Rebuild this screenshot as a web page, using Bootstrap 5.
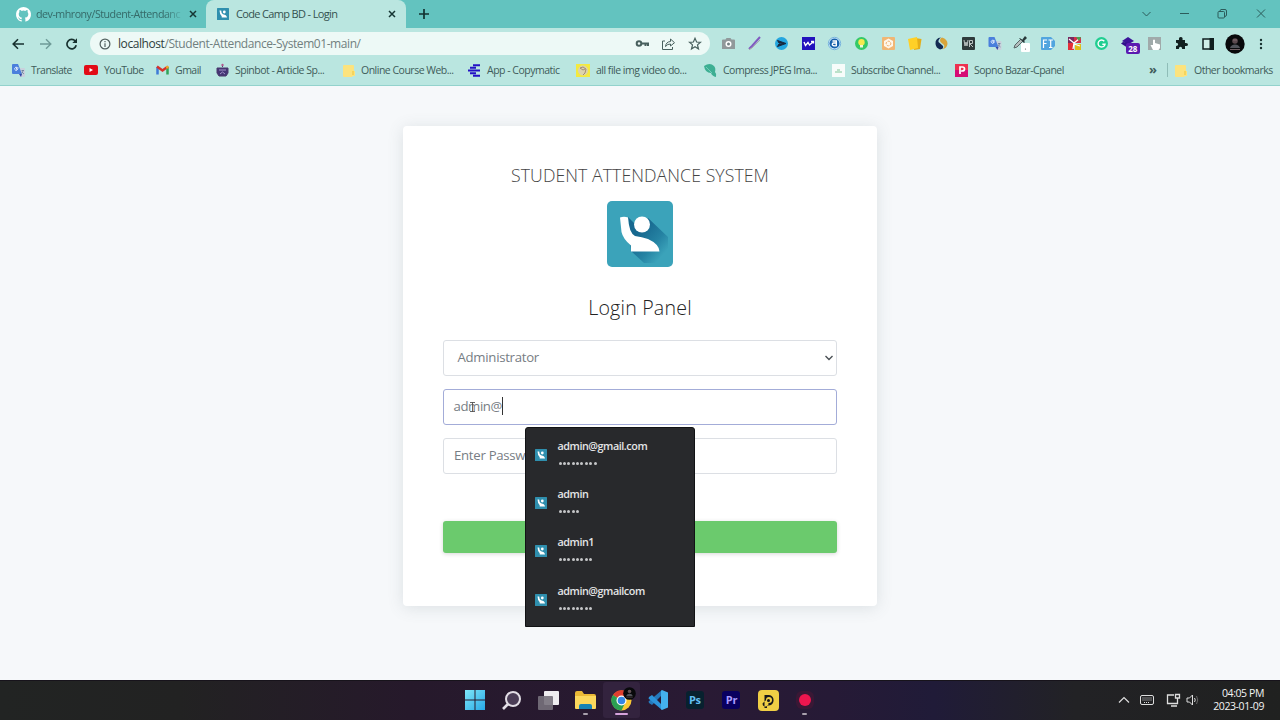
<!DOCTYPE html>
<html lang="en">
<head>
<meta charset="utf-8">
<title>Code Camp BD - Login</title>
<link href="https://cdn.jsdelivr.net/npm/bootstrap@5.3.0/dist/css/bootstrap.min.css" rel="stylesheet">
<style>
body{width:1280px;height:720px;overflow:hidden;background:#f6f8fa;font-family:"Open Sans","Noto Sans",sans-serif;font-size:11px;line-height:14px;color:#3f5c5a}
svg{display:block;flex:none;overflow:visible}
.tabstrip{height:28px;background:#63c3bf}
.tab1{width:206px;padding:0 9px 0 16px;letter-spacing:-.5px;font-size:10.7px;color:#356a68}
.tab1 .ttl{width:146px;margin-left:5px;-webkit-mask-image:linear-gradient(90deg,#000 88%,rgba(0,0,0,.15))}
.tab2{width:200px;background:#bae6e0;border-radius:8px 8px 0 0;padding:0 10px 0 11px;color:#34524f;letter-spacing:-.65px}
.toolbar{height:31px;background:#bae6e0}
.navs{width:90px;padding-left:12px;gap:13.5px}
.omni{width:620px;height:23px;border-radius:12px;background:#edf9f6;padding:0 9px 0 9px;font-size:12px;letter-spacing:-.43px;color:#71807f}
.omni b{font-weight:400;color:#2e3e3d}
.exts{margin-left:4.7px}
.exts>span{width:26.68px;display:flex;justify-content:center;position:relative}
.cnt{position:absolute;left:11px;top:6px;width:14px;height:11px;border-radius:2px;background:#5b1ab0;color:#fff;font-weight:700;font-size:8px;line-height:11px;text-align:center}
.marks{height:27px;background:#bae6e0;border-bottom:1px solid #93d2cc;display:grid;grid-template-columns:72px 72px 60px 127px 125px 108px 128px 128px 122px 195px 18px 8px 97px;padding-left:12px;padding-bottom:4px;align-items:center;letter-spacing:-.5px;font-size:10.5px}
.marks>span{display:flex;align-items:center;white-space:nowrap}
.marks svg{margin-right:6px}
.marks .vr{width:1px;height:14px;min-height:0;background:#8fbdb8;opacity:1;align-self:center}
.main-area{height:594px;padding-top:40px}
.login{width:474px;height:480px;border:0;border-radius:4px;padding:39px 40px 40px;box-shadow:0 2px 16px rgba(90,105,115,.16);font-family:"Open Sans",sans-serif;align-items:center}
.login h1{font-size:17.7px;font-weight:300;line-height:20px;margin:0 0 16px;color:#444;letter-spacing:.06px}
.login h2{font-size:19.6px;line-height:26px;font-weight:300;margin:28px 0 19px;color:#222;letter-spacing:.2px}
.fld{width:394px;height:36px;border:1px solid #dcdfe4;border-radius:3px;background:#fff;font-size:13.2px;color:#777d84;padding:0 10px 2px;margin-bottom:13.2px;display:flex;align-items:center;letter-spacing:-.28px;position:relative}
.fld.on{border-color:#a3acd8;padding-left:9.5px;letter-spacing:-.4px}
.ibeam{position:absolute;left:26px;top:12px}
.go{width:394px;height:32px;border:0;border-radius:3px;background:#6bca6d;margin-top:33px;box-shadow:0 1px 4px rgba(0,0,0,.16)}
.pop{position:absolute;left:81px;top:36.500px;width:170px;height:200px;background:#28292c;border:1.500px solid #111214;border-radius:3px 3px 0 0;z-index:5;padding-top:1px}
.pop>div{height:48.400px;padding:10px 0 0 9px;gap:10.500px;color:#e4e5e6;font-size:10.800px;font-weight:600;letter-spacing:-.46px}
.pop svg{margin-top:10px}
.dots{display:flex;gap:1.4px;margin:9px 0 0 1px}
.dots i{width:3px;height:3px;border-radius:50%;background:#c5c6c8}
.taskbar{height:40px;background:linear-gradient(90deg,#222423 0,#222222 14%,#26192b 32%,#291a34 55%,#261a36 65%,#201b38 73%,#222225 84%,#202120);border-top:1px solid #17131b;display:grid;grid-template-columns:457px 366px 1fr}
.apps>span{width:36.65px;height:36px;display:flex;align-items:center;justify-content:center;position:relative;margin-top:1px}
.apps .run::after{content:"";position:absolute;bottom:3px;left:16px;width:5px;height:2px;border-radius:1px;background:#a9a1ad}
.apps .cur{background:#33233e;border-radius:3px}
.apps .cur::after{left:12px;width:13px;background:#d6a3dc}
.sq{width:18px;height:18px;border-radius:3px;font-size:11px;font-weight:700;line-height:17px;text-align:center;letter-spacing:-.3px}
.clock{font-size:10.5px;line-height:13px;color:#f4f4f4;text-align:right;width:66px;letter-spacing:-.4px;white-space:nowrap;font-weight:500}
</style>
</head>
<body>
<svg width="0" height="0" class="position-absolute"><defs>
<linearGradient id="lg" x1="0" y1="0" x2="1" y2="1"><stop offset=".3" stop-color="#17688f"/><stop offset=".62" stop-color="#2583a3"/><stop offset=".85" stop-color="#3ba3ba"/></linearGradient>
<linearGradient id="win" x1="0" y1="0" x2="1" y2="1"><stop stop-color="#7fe6f8"/><stop offset="1" stop-color="#27a8e6"/></linearGradient>
<symbol id="hand" viewBox="0 0 66 66"><rect width="66" height="66" rx="5" fill="#3ba3ba"/><path d="M21 16L29 24L41 17L61 36V58Q58 62 50 62H37L24 50Z" fill="url(#lg)"/><circle cx="35" cy="23.500" r="8" fill="#fff"/><path d="M13 16.500Q17 15 21 16.500Q22 32 28 35Q35 36 41 38Q52 43 52.500 50.500H24V44.500Q16 38 14.500 31Z" fill="#fff"/></symbol>
<symbol id="fav" viewBox="0 0 12 12"><rect width="12" height="12" rx=".5" fill="#2f8fae"/><circle cx="7.300" cy="4" r="1.400" fill="#fff"/><path d="M2.500 2.500H4.200Q4.300 5.800 6 6.300Q9.500 6.800 10 9.500H4.700V8.300Q2.700 6.500 2.500 2.500Z" fill="#fff"/></symbol>
<symbol id="xx" viewBox="0 0 8 8"><path d="M1 1L7 7M7 1L1 7" stroke="#163634" stroke-width="1.500"/></symbol>
<symbol id="gt" viewBox="0 0 13 13"><path d="M5 4H12Q13 4 13 5V12Q13 13 12 13H8Z" fill="#c9d1dc"/><path d="M1 0H6L10 10H1Q0 10 0 9V1Q0 0 1 0Z" fill="#4a7fdc"/><path d="M6.600 4H4.500V5.300H5.700Q5 6.700 3.700 6.300Q2.500 5.700 2.700 4.400Q3.500 2.500 5.300 3.400" stroke="#e5efff" fill="none"/><path d="M7 10L9 13L10 10Z" fill="#3347a5"/><path d="M9.500 6.500H12M11 6Q11 8.500 9.500 9.500M9.800 8L12 10" stroke="#6a7b98" stroke-width=".8" fill="none"/></symbol>
<symbol id="fold" viewBox="0 0 12 13"><path d="M1 1H10Q11 1 11 2V7H12V12H10L9 13H1Q0 13 0 12V2Q0 1 1 1Z" fill="#fce37e"/><path d="M9 7H11V11H9Z" fill="#f5d45d"/></symbol>
<symbol id="me" viewBox="0 0 20 20"><circle cx="10" cy="10" r="9.700" fill="#08090b"/><circle cx="10" cy="7" r="2.800" fill="#5a494e"/><path d="M5 14Q6 10.500 10 10.500T15 14Z" fill="#51535a"/><path d="M5 15.500H15M8 6H12" stroke="#8a7478" stroke-width=".8"/></symbol>
</defs></svg>

<header>
<div class="tabstrip d-flex">
 <div class="tab1 d-flex align-items-center"><svg width="15" height="15" viewBox="0 0 16 16"><path fill="#fff" d="M8 0a8 8 0 0 0-2.530 15.590c.4.070.55-.17.55-.38v-1.490c-2.230.48-2.700-.95-2.700-.95-.36-.92-.89-1.170-.89-1.170-.73-.5.050-.49.050-.49.800.060 1.230.830 1.230.830.720 1.230 1.880.87 2.330.67.070-.52.280-.87.510-1.070-1.780-.2-3.640-.89-3.640-3.950 0-.87.310-1.590.82-2.150-.08-.2-.36-1.020.08-2.120 0 0 .67-.22 2.200.82a7.400 7.400 0 0 1 4 0c1.530-1.040 2.200-.82 2.200-.82.440 1.100.160 1.920.080 2.120.51.560.82 1.270.82 2.150 0 3.070-1.870 3.750-3.650 3.950.290.250.540.730.540 1.480v2.190c0 .210.150.460.550.380A8 8 0 0 0 8 0z"/></svg><div class="ttl text-nowrap">dev-mhrony/Student-Attendanc</div><svg class="ms-auto" width="8" height="8"><use href="#xx"/></svg></div>
 <div class="tab2 d-flex align-items-center"><svg width="12" height="12"><use href="#fav"/></svg><span class="text-nowrap" style="margin-left:7px">Code Camp BD - Login</span><svg class="ms-auto" width="8" height="8"><use href="#xx"/></svg></div>
 <svg style="margin:9px 0 0 13px" width="10" height="10"><path d="M5 0V10M0 5H10" stroke="#123230" stroke-width="1.700"/></svg>
 <div class="ms-auto d-flex align-items-center" style="width:139px"><svg width="139" height="26" fill="none" stroke="#2c5c5b"><path d="M1.500 11L5.500 15L9.500 11M39 12.500H48"/><rect x="77" y="10.500" width="6.500" height="6.500" rx="1"/><path d="M79 10.500Q79 8.500 80 8.500H84Q85.500 8.500 85.500 10V14Q85.500 15.500 83.500 15.500M116 8.500L124 16.500M124 8.500L116 16.500"/></svg></div>
</div>
<div class="toolbar d-flex align-items-center">
 <div class="navs d-flex align-items-center">
  <svg width="13" height="12" fill="none" stroke="#17312f" stroke-width="1.600"><path d="M12 6H1.500M6 1.200L1.200 6L6 10.800"/></svg>
  <svg width="13" height="12" fill="none" stroke="#6f9b98" stroke-width="1.400"><path d="M1 6H11.500M7 1.200L11.800 6L7 10.800"/></svg>
  <svg width="13" height="12" fill="none" stroke="#17312f" stroke-width="1.700"><path d="M10.300 3.200A4.700 4.700 0 1 0 11.200 7.300"/><path d="M12 .3V5H7.300Z" fill="#17312f" stroke="none"/></svg>
 </div>
 <div class="omni d-flex align-items-center"><svg width="12" height="12" fill="none" stroke="#52605f" stroke-width="1.200"><circle cx="6" cy="6" r="4.900"/><path d="M6 5.300V9M6 3V4.300"/></svg><span style="margin-left:7px"><b>localhost</b>/Student-Attendance-System01-main/</span>
  <svg class="ms-auto" width="65" height="14" fill="none" stroke="#48605e"><circle cx="3" cy="6.500" r="2.300" stroke-width="2"/><path d="M5.500 6.500H12V9M9.500 6.500V9" stroke-width="2"/><path d="M29 4H26.500V12.500H36.500V10"/><path d="M29.500 9.500Q30 4.800 34.500 4.500V2L38.500 5.700L34.500 9V7Q31.500 6.800 29.500 9.500Z"/><path d="M59 1.300L60.600 5L64.500 5.300L61.500 7.900L62.500 12L59 9.800L55.500 12L56.500 7.900L53.500 5.300L57.400 5Z" stroke-width="1.200"/></svg></div>
 <div class="exts d-flex align-items-center">
  <span><svg width="13" height="13"><path d="M0 3.500Q0 2.500 1 2.500H3.500L4.500 1H8.500L9.500 2.500H12Q13 2.500 13 3.500V12H0Z" fill="#91999b"/><circle cx="6.500" cy="7" r="3" fill="#fff"/><circle cx="6.500" cy="7" r="1.500" fill="#748083"/></svg></span>
  <span><svg width="13" height="13"><path d="M12 0L4 9L1 12" stroke="#805bc0" stroke-width="2" fill="none"/><path d="M1 12.500L4 11L12 3" stroke="#aaa" fill="none"/></svg></span>
  <span><svg width="13" height="13"><circle cx="6.500" cy="6.500" r="6.500" fill="#24a6df"/><path d="M2.500 3.500L11 6.500L2.500 9.500L4 7H7V6H4Z" fill="#18283f" stroke="#18283f"/></svg></span>
  <span><svg width="13" height="13"><rect width="13" height="13" fill="#2212bd"/><path d="M2 5L3.500 8.500L6 5.500L7.500 8L11 5M9 4.500H11.500V6.500" stroke="#fff" stroke-width="1.400" fill="none"/></svg></span>
  <span><svg width="13" height="13"><circle cx="6.500" cy="6.500" r="6.200" fill="#d4efff" stroke="#579ed2" stroke-width=".7"/><circle cx="6.500" cy="6.500" r="5" fill="#1761ac"/><path d="M4.500 4H8.300V9.300M8.300 6H5.500Q4.300 6 4.300 7.600T8.300 8.800" stroke="#fff" stroke-width="1.400" fill="none"/></svg></span>
  <span><svg width="13" height="13"><circle cx="6.500" cy="6.500" r="6.500" fill="#35c967"/><circle cx="6.500" cy="5.300" r="3.200" fill="#f5e94d"/><path d="M5 8H8V10.500H5Z" fill="#f1f6d6"/></svg></span>
  <span><svg width="13" height="13"><rect width="13" height="13" rx="1" fill="#f0b674"/><path d="M6.500 1.500L11 4V9L6.500 11.500L2 9V4Z" fill="#fff6e9"/><circle cx="6.500" cy="6.500" r="2.300" fill="none" stroke="#eba65c" stroke-dasharray="2 1"/></svg></span>
  <span><svg width="14" height="13"><path d="M7 1L13.500 2L12 12L6 13Z" fill="#e4ae18"/><path d="M0 2L9 0L10 11L2 13Z" fill="#ffd027"/></svg></span>
  <span><svg width="13" height="13"><path d="M6 .5Q0 1 .5 7Q1 11 5 12.500Q9 12 8 9L3.500 5Q3 2.500 6 .5Z" fill="#132b53"/><path d="M7 .5Q12.500 2 12.500 7Q12 11 7.500 12.500Q10 10 9 8L5.500 5Q4 2 7 .5Z" fill="#d8a439"/></svg></span>
  <span><svg width="13" height="13"><rect width="13" height="13" rx="1" fill="#2e3a3b"/><path d="M2 3L3 9L4 5L5 9L6 3M7.500 10V3.500H10.500V6.500H7.500L11 10" stroke="#bbc2c2" fill="none"/></svg></span>
  <span><svg width="14" height="13"><use href="#gt"/></svg></span>
  <span><svg width="17" height="17"><path d="M1 13L2 10L8 4L10 6L4 12Z" fill="#b4bebe" stroke="#586667"/><path d="M7 3L9 5L12 1L14 3L11 6L12 7L11 8L6 3Z" fill="#29383a"/><rect x="8" y="8" width="9" height="9" rx="1" fill="#fff"/><circle cx="12.500" cy="14" r=".6" fill="#555"/></svg></span>
  <span><svg width="14" height="13"><path d="M1 0H10L14 4V9L10 13H1Q0 13 0 12V1Q0 0 1 0Z" fill="#51a5df"/><path d="M2.500 11V3H6M2.500 6.500H5.500M7.500 3H12M9.700 3V10M8 10.500H11.500" stroke="#fff" stroke-width="1.200" fill="none"/></svg></span>
  <span><svg width="13" height="13"><path d="M0 0H6V6H0Z" fill="#772b60"/><path d="M6 0H13V6H6Z" fill="#d5304a"/><path d="M0 6H6V13H0Z" fill="#e42f39"/><path d="M7 7H13V13H7Z" fill="#dfbd1c"/><path d="M1 2L6 6L5 12M6 6L11 2M6 7L12 9" stroke="#fff" stroke-width="1.300" fill="none"/><path d="M8 0L13 0L11 4Z" fill="#4aa253"/></svg></span>
  <span><svg width="13" height="13"><circle cx="6.500" cy="6.500" r="6.500" fill="#20ce91"/><path d="M9.300 4.300A3.500 3.500 0 1 0 10 7.300H7.300" stroke="#fff" stroke-width="1.400" fill="none"/></svg></span>
  <span><svg width="14" height="13"><path d="M7 0L13 4L7 7.500L1 4Z" fill="#3c1499"/><path d="M2 5L0 6.500L7 11L14 7Z" fill="#30108a"/></svg><i class="cnt fst-normal">28</i></span>
  <span><svg width="13" height="13"><rect width="13" height="13" fill="#a0aaaa"/><path d="M5 3Q6 2 7 3V6L12 7.500V11L10.500 13H5L2.500 8H5Z" fill="#fff"/></svg></span>
  <span><svg width="13" height="13"><path d="M1 3H4Q3.500 0 5.800 0T7.500 3H10V6Q13 5.500 13 7.500T10 9V12H7.200Q7 9.700 5.500 9.700T3.800 12H1V9Q3.200 8.700 3.200 7.300T1 5.700Z" fill="#11201f"/></svg></span>
  <span><svg width="12" height="12"><path d="M1 1H11V11H1Z" stroke="#111f1f" stroke-width="1.500" fill="#cfeee8"/><path d="M7.500 0H12V12H7.500Z" fill="#111f1f"/></svg></span>
  <span><svg width="20" height="20"><use href="#me"/></svg></span>
  <span><svg width="4" height="12" fill="#17312f"><circle cx="2" cy="2" r="1.200"/><circle cx="2" cy="6" r="1.200"/><circle cx="2" cy="10" r="1.200"/></svg></span>
 </div>
</div>
<nav class="marks">
 <span><svg width="13" height="13"><use href="#gt"/></svg>Translate</span>
 <span><svg width="14" height="10"><rect width="14" height="10" rx="2" fill="#e20b16"/><path d="M5.500 3V7L9 5Z" fill="#fff"/></svg>YouTube</span>
 <span><svg width="13" height="10" fill="none" stroke-width="2.500"><path d="M1.500 9.500V2" stroke="#3e7bd7"/><path d="M11.500 9.500V2" stroke="#31a45a"/><path d="M1 1.500L6.500 5.500L12 1.500" stroke="#d7322c"/><path d="M11.300 3.500V1" stroke="#eaab29"/></svg>Gmail</span>
 <span><svg width="13" height="13"><path d="M6.500 3V0M1 4H12V9L10 12H3L1 9Z" stroke="#4b386d" fill="#443675"/><path d="M3 6H10M4 10L6.500 8L9 10" stroke="#a493cb" fill="none"/><circle cx="6.500" cy="1" r="1.200" fill="#b1588e"/></svg>Spinbot - Article Sp...</span>
 <span><svg width="12" height="13"><use href="#fold"/></svg>Online Course Web...</span>
 <span><svg width="13" height="13" fill="none" stroke="#2412c5" stroke-width="2"><path d="M5 1.200H12M2 3.800H8M0 6.500H12M2 9.200H8M5 11.800H12"/></svg>App - Copymatic</span>
 <span><svg width="14" height="13"><rect width="14" height="13" fill="#f3e940"/><circle cx="7" cy="6.500" r="5" fill="#ddd3ac"/><path d="M4 4L7 3L10 5L9 9L7 11M4 4L7 6L9 5" stroke="#a38d72" fill="none"/></svg>all file img video do...</span>
 <span><svg width="13" height="13"><path d="M0 2Q6-2 10 2Q12 4 11 8Q13 10 12 13Q8 12 7 9Q1 9 0 2Z" fill="#3daf93"/><path d="M2 3L8 9" stroke="#72cdb8"/></svg>Compress JPEG Ima...</span>
 <span><svg width="13" height="13"><rect width="13" height="13" fill="#f7fcfa"/><path d="M3 8H10M5 6H8" stroke="#80c79a"/></svg>Subscribe Channel...</span>
 <span><svg style="margin-left:1px" width="13" height="13"><rect width="13" height="13" fill="#d60b75"/><path d="M0 0H13V6H0Z" fill="#ed3150"/><path d="M5 10V3H7.500Q9.500 3 9.500 5T7 7H6" stroke="#fff" stroke-width="1.700" fill="none"/></svg>Sopno Bazar-Cpanel</span>
 <span class="fw-bold" style="font-size:13px;margin-top:-2px">»</span><i class="vr"></i>
 <span><svg style="margin-right:7px" width="12" height="13"><use href="#fold"/></svg>Other bookmarks</span>
</nav>
</header>

<main class="main-area d-flex justify-content-center">
<form class="card login">
 <h1>STUDENT ATTENDANCE SYSTEM</h1>
 <svg width="66" height="66"><use href="#hand"/></svg>
 <h2>Login Panel</h2>
 <div class="fld" style="padding-left:13.5px;padding-right:3px">Administrator<svg class="ms-auto" width="9" height="6" fill="none" stroke="#4b5055" stroke-width="1.400"><path d="M1.500 2L5 5.500L8.500 2"/></svg></div>
 <div class="fld on">admin@<svg width="1" height="18"><path d="M.5 0V18" stroke="#333"/></svg><svg class="ibeam" width="5" height="10" fill="none" stroke="#555" stroke-width=".9"><path d="M0 .5H5M2.500 0V10M0 9.500H5"/></svg>
  <div class="pop">
   <div class="d-flex"><svg width="12" height="12"><use href="#fav"/></svg><div>admin@gmail.com<div class="dots"><i></i><i></i><i></i><i></i><i></i><i></i><i></i><i></i><i></i></div></div></div>
   <div class="d-flex"><svg width="12" height="12"><use href="#fav"/></svg><div>admin<div class="dots"><i></i><i></i><i></i><i></i><i></i></div></div></div>
   <div class="d-flex"><svg width="12" height="12"><use href="#fav"/></svg><div>admin1<div class="dots"><i></i><i></i><i></i><i></i><i></i><i></i><i></i><i></i></div></div></div>
   <div class="d-flex"><svg width="12" height="12"><use href="#fav"/></svg><div>admin@gmailcom<div class="dots"><i></i><i></i><i></i><i></i><i></i><i></i><i></i><i></i></div></div></div>
  </div>
 </div>
 <div class="fld">Enter Passw</div>
 <button type="button" class="btn go" aria-label="Login"></button>
</form>
</main>

<footer class="taskbar">
 <div></div>
 <div class="apps d-flex">
  <span><svg width="20" height="20" fill="url(#win)"><path d="M0 0H9.500V9.500H0ZM10.500 0H20V9.500H10.500ZM0 10.500H9.500V20H0ZM10.500 10.500H20V20H10.500Z"/></svg></span>
  <span><svg width="19" height="19" fill="none" stroke="#e2dde5"><circle cx="11" cy="8" r="7" stroke-width="2" fill="#4b3d56"/><path d="M6 13L1 18" stroke-width="2.600"/></svg></span>
  <span><svg width="21" height="19"><rect x="6" width="15" height="14" rx="1" fill="#efedf0"/><rect y="5" width="15" height="14" rx="1" fill="#77717c" opacity=".9"/></svg></span>
  <span class="run"><svg width="21" height="19"><path d="M0 2Q0 0 2 0H7L9 3H19Q21 3 21 5V17H0Z" fill="#eab936"/><path d="M0 5H21V17Q21 18 20 18H1Q0 18 0 17Z" fill="#fbd85c"/><path d="M4 18V15Q4 13 6 13H15Q17 13 17 15V18Z" fill="#1683b5"/></svg></span>
  <span class="run cur"><svg width="21" height="21" viewBox="0 0 21 21"><circle cx="10.500" cy="10.500" r="10" fill="#fac832"/><path d="M10.500 10.500L2 5A10 10 0 0 1 20 7H10Z" fill="#df3f30"/><path d="M2 5A10 10 0 0 0 10.500 20.500L14 13L10.500 10.500Z" fill="#2ba052"/><circle cx="10.500" cy="10.500" r="5" fill="#fff"/><circle cx="10.500" cy="10.500" r="3.800" fill="#3486e5"/><svg x="12" y="-3" width="13" height="13" viewBox="0 0 20 20"><use href="#me" width="20" height="20"/></svg></svg></span>
  <span><svg width="20" height="20"><path d="M14 0V5L4 15L1 13L.5 11.500Z" fill="#2479bc"/><path d="M14 20V15L4 5L1 7L.5 8.500Z" fill="#2d94db"/><path d="M14 0L20 2.500V17.500L14 20L13 19V1Z" fill="#44b1ee"/></svg></span>
  <span><i class="sq fst-normal" style="background:#07212f;color:#62bff2">Ps</i></span>
  <span><i class="sq fst-normal" style="background:#09005f;color:#aa9cff">Pr</i></span>
  <span><svg width="21" height="21"><rect width="21" height="21" rx="4" fill="#f0ce45"/><path d="M6.500 7V5H11A5.300 5.300 0 0 1 11 15.500H9V18H6.500V14M4.500 13.500A3 3 0 1 0 7.500 10.500" fill="#18171b"/><circle cx="11" cy="10" r="3" fill="#f0ce45"/><circle cx="10.500" cy="10.500" r="1.500" fill="#18171b"/></svg></span>
  <span class="run"><svg width="18" height="18"><rect width="18" height="18" rx="6" fill="#3a1835"/><circle cx="9" cy="9" r="6" fill="#ed164e"/></svg></span>
 </div>
 <div class="d-flex align-items-center justify-content-end" style="padding:0 16px 2px 0">
  <svg width="80" height="16" fill="none" stroke="#dedede"><path d="M1 10.500L6 5.500L11 10.500" stroke-width="1.200"/><rect x="22.500" y="3.500" width="13" height="9" rx="1.500"/><path d="M24.500 6H34M24.500 8H34M26 10.500H32" stroke-dasharray="1 1"/><path d="M56 3H49.500V11.500H59.500V8M53 14H59M57.500 2.500H61.500V6H57.500ZM59.500 6V11" stroke-width="1.300"/><path d="M69 6H71.500L74.500 3V13L71.500 10H69ZM76.500 6Q78 8 76.500 10"/><path d="M78.500 4Q81 8 78.500 12" stroke="#666"/></svg>
  <div class="clock">04:05 PM<br>2023-01-09</div>
 </div>
</footer>
<script src="https://cdn.jsdelivr.net/npm/bootstrap@5.3.0/dist/js/bootstrap.bundle.min.js"></script>
</body>
</html>
